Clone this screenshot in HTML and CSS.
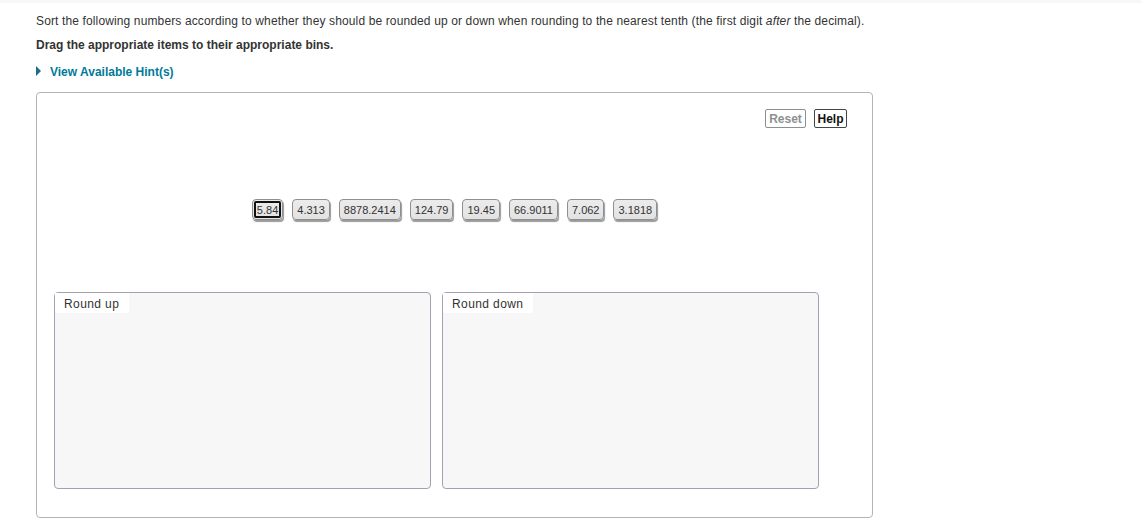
FILE: index.html
```html
<!DOCTYPE html>
<html>
<head>
<meta charset="utf-8">
<link rel="stylesheet" href="styles.css">
</head>
<body>
<div class="topband"></div>
<div class="content">
  <p class="prompt">Sort the following numbers according to whether they should be rounded up or down when rounding to the nearest tenth (the first digit <em>after</em> the decimal).</p>
  <p class="instr">Drag the appropriate items to their appropriate bins.</p>
  <div class="hint"><span class="tri"></span><span class="hint-text">View Available Hint(s)</span></div>
  <div class="box">
    <div class="btnrow">
      <span class="btn reset">Reset</span>
      <span class="btn help">Help</span>
    </div>
    <div class="tiles">
      <span class="tile focused">5.84</span>
      <span class="tile">4.313</span>
      <span class="tile">8878.2414</span>
      <span class="tile">124.79</span>
      <span class="tile">19.45</span>
      <span class="tile">66.9011</span>
      <span class="tile">7.062</span>
      <span class="tile">3.1818</span>
    </div>
    <div class="bins">
      <div class="bin"><span class="bin-label">Round up</span></div>
      <div class="bin"><span class="bin-label">Round down</span></div>
    </div>
  </div>
</div>
</body>
</html>
```
FILE: styles.css
```css
html, body {
  margin: 0;
  padding: 0;
  background: #fff;
  font-family: "Liberation Sans", Arial, sans-serif;
  color: #333;
  -webkit-font-smoothing: none;
}
.topband {
  height: 3px;
  background: #f8f8f8;
}
.content {
  padding-left: 36px;
  width: 837px;
}
.prompt {
  margin: 11px 0 0 0;
  font-size: 12px;
  line-height: 14px;
  letter-spacing: 0.13px;
  white-space: nowrap;
}
.prompt em {
  font-style: italic;
}
.instr {
  margin: 10px 0 0 0;
  font-size: 12px;
  line-height: 14px;
  font-weight: bold;
}
.hint {
  margin-top: 13px;
  display: flex;
  align-items: center;
  height: 14px;
}
.tri {
  width: 0;
  height: 0;
  border-top: 5px solid transparent;
  border-bottom: 5px solid transparent;
  border-left: 5px solid #1b6d88;
  margin-right: 9px;
  margin-top: -3px;
}
.hint-text {
  color: #007a99;
  font-size: 12px;
  font-weight: bold;
}
.box {
  margin-top: 13px;
  border: 1px solid #b4b4b4;
  border-radius: 4px;
  padding: 16px 25px 0 17px;
  box-sizing: border-box;
  height: 426px;
  display: flex;
  flex-direction: column;
}
.btnrow {
  display: flex;
  justify-content: flex-end;
  gap: 8px;
}
.btn {
  display: inline-flex;
  align-items: center;
  justify-content: center;
  height: 19px;
  box-sizing: border-box;
  border: 1px solid #8a9090;
  border-radius: 2px;
  font-size: 12px;
  font-weight: bold;
  padding: 0 3px;
}
.reset {
  color: #8d9090;
  width: 41px;
}
.help {
  color: #111;
  border-color: #404646;
  width: 33px;
}
.tiles {
  margin-top: 71px;
  display: flex;
  justify-content: center;
  gap: 9px;
  padding-left: 8px;
}
.tile {
  display: inline-flex;
  align-items: center;
  height: 21px;
  box-sizing: border-box;
  padding: 0 4px;
  font-size: 11px;
  color: #333;
  background: linear-gradient(#ececec, #e2e2e2);
  border: 1px solid #8f8f8f;
  border-radius: 4px;
  box-shadow: 1px 2px 1px #9a9a9a;
}
.tile.focused {
  outline: 2px solid #111;
  outline-offset: -4px;
}
.bins {
  margin-top: 72px;
  display: flex;
  gap: 11px;
}
.bin {
  width: 377px;
  height: 197px;
  box-sizing: border-box;
  border: 1px solid #a49fb2;
  border-radius: 4px;
  background: #f7f7f7;
}
.bin-label {
  display: inline-block;
  background: #fff;
  font-size: 12px;
  color: #333;
  padding: 4px 10px 2px 9px;
  line-height: 14px;
  letter-spacing: 0.4px;
}
```
